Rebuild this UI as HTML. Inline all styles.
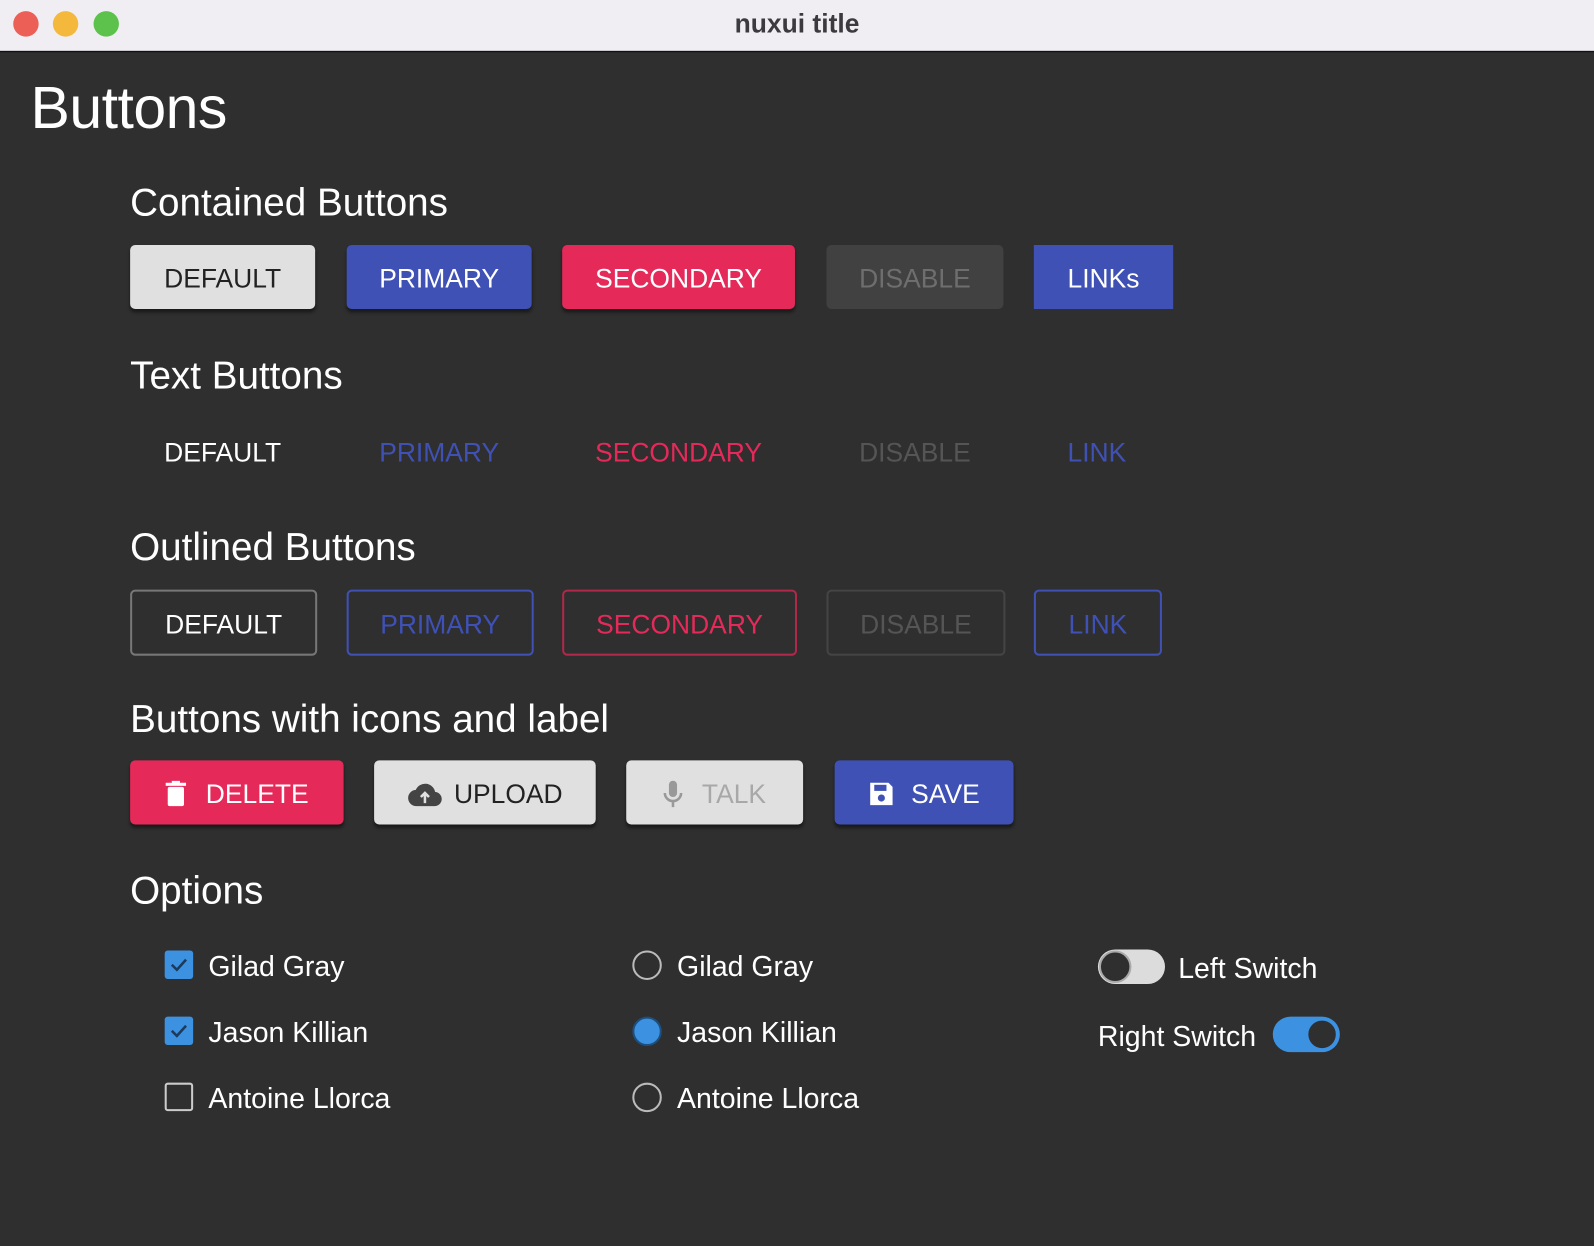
<!DOCTYPE html>
<html><head><meta charset="utf-8"><style>
html,body{margin:0;padding:0;width:1594px;height:1246px;overflow:hidden;background:#2f2f2f;font-family:"Liberation Sans",Arial,sans-serif;}
#w{position:absolute;left:0;top:0;width:1568px;height:1226px;transform:scale(1.01659);transform-origin:0 0;}
.tb{position:absolute;left:0;top:0;width:1568px;height:50px;background:#f1eef3;border-bottom:2px solid #111;}
.dot{position:absolute;top:11px;width:25px;height:25px;border-radius:50%;}
.ttl{position:absolute;top:8px;left:0;width:1568px;text-align:center;font-size:26px;font-weight:bold;color:#3c3a3e;}
.a{position:absolute;}
h1,h2{margin:0;font-weight:normal;color:#fff;position:absolute;white-space:nowrap;}
h1{font-size:58px;left:30px;top:73px;letter-spacing:-0.5px}
h2{font-size:38px;left:128px;}
.b{position:absolute;height:63px;display:flex;align-items:center;justify-content:center;font-size:26px;border-radius:5px;box-sizing:border-box;white-space:nowrap;padding-top:3px;}
.sh{box-shadow:0 3px 3px rgba(0,0,0,.45);}
.o{border:2px solid;}
.lab{position:absolute;color:#fff;font-size:28px;white-space:nowrap;}
.cb{position:absolute;left:162px;width:28px;height:28px;border-radius:3px;box-sizing:border-box;}
.rd{position:absolute;left:622px;width:29px;height:29px;border-radius:50%;box-sizing:border-box;border:2px solid #bbb;}
</style></head><body><div id="w">
<div class="tb">
<div class="dot" style="left:13px;background:#ec5f57"></div>
<div class="dot" style="left:52px;background:#f4b83c"></div>
<div class="dot" style="left:92px;background:#5dc24b"></div>
<div class="ttl">nuxui title</div>
</div>
<h1>Buttons</h1>
<h2 style="top:179px">Contained Buttons</h2>
<div class="b sh" style="left:128px;top:241px;width:182px;background:#e0e0e0;color:#222">DEFAULT</div>
<div class="b sh" style="left:341px;top:241px;width:182px;background:#3f51b5;color:#fff">PRIMARY</div>
<div class="b sh" style="left:553px;top:241px;width:229px;background:#e52a5a;color:#fff">SECONDARY</div>
<div class="b" style="left:813px;top:241px;width:174px;background:#414141;color:#6e6e6e">DISABLE</div>
<div class="b" style="left:1017px;top:241px;width:137px;background:#3f51b5;color:#fff;border-radius:0">LINKs</div>

<h2 style="top:349px">Text Buttons</h2>
<div class="b" style="left:128px;top:412px;width:182px;color:#fff">DEFAULT</div>
<div class="b" style="left:341px;top:412px;width:182px;color:#3f51b5">PRIMARY</div>
<div class="b" style="left:553px;top:412px;width:229px;color:#e52a5a">SECONDARY</div>
<div class="b" style="left:813px;top:412px;width:174px;color:#555">DISABLE</div>
<div class="b" style="left:1017px;top:412px;width:124px;color:#3f51b5">LINK</div>

<h2 style="top:518px">Outlined Buttons</h2>
<div class="b o" style="left:128px;top:580px;width:184px;height:65px;color:#fff;border-color:#777">DEFAULT</div>
<div class="b o" style="left:341px;top:580px;width:184px;height:65px;color:#3f51b5;border-color:#3f51b5">PRIMARY</div>
<div class="b o" style="left:553px;top:580px;width:231px;height:65px;color:#e52a5a;border-color:#b0284a">SECONDARY</div>
<div class="b o" style="left:813px;top:580px;width:176px;height:65px;color:#555;border-color:#444">DISABLE</div>
<div class="b o" style="left:1017px;top:580px;width:126px;height:65px;color:#3f51b5;border-color:#3f51b5">LINK</div>

<h2 style="top:687px">Buttons with icons and label</h2>
<div class="b sh" style="left:128px;top:748px;width:210px;background:#e52a5a;color:#fff">
<svg width="22" height="26" viewBox="0 0 22 26" style="margin-right:18px"><rect x="3" y="6" width="16" height="19" rx="2" fill="#fff"/><rect x="1" y="2" width="20" height="3" fill="#fff"/><rect x="7" y="0" width="8" height="3" fill="#fff"/></svg>DELETE</div>
<div class="b sh" style="left:368px;top:748px;width:218px;background:#e0e0e0;color:#222">
<svg width="34" height="26" viewBox="0 0 34 26" style="margin-right:12px"><path d="M9 25h17a7 7 0 0 0 1-14A10 10 0 0 0 8 9a8 8 0 0 0 1 16z" fill="#444"/><path d="M17 22v-9M13 16l4-4 4 4" stroke="#e0e0e0" stroke-width="2.5" fill="none"/></svg>UPLOAD</div>
<div class="b sh" style="left:616px;top:748px;width:174px;background:#e0e0e0;color:#a8a8a8">
<svg width="20" height="28" viewBox="0 0 20 28" style="margin-right:18px"><rect x="6" y="1" width="8" height="16" rx="4" fill="#999"/><path d="M2 13a8 8 0 0 0 16 0M10 21v6" stroke="#999" stroke-width="2.5" fill="none"/></svg>TALK</div>
<div class="b sh" style="left:821px;top:748px;width:176px;background:#3f51b5;color:#fff">
<svg width="26" height="26" viewBox="0 0 26 26" style="margin-right:16px"><path d="M2 2h18l4 4v18H2z" fill="#fff"/><rect x="6" y="4" width="12" height="6" fill="#3f51b5"/><circle cx="13" cy="17" r="3.5" fill="#3f51b5"/></svg>SAVE</div>

<h2 style="top:856px">Options</h2>
<div class="cb" style="top:935px;background:#3c91e0"><svg width="28" height="28"><path d="M7 14l5 5 9-10" stroke="#1c3a5c" stroke-width="2.5" fill="none"/></svg></div>
<div class="cb" style="top:1000px;background:#3c91e0"><svg width="28" height="28"><path d="M7 14l5 5 9-10" stroke="#1c3a5c" stroke-width="2.5" fill="none"/></svg></div>
<div class="cb" style="top:1065px;border:2px solid #ccc"></div>
<div class="lab" style="left:205px;top:935px">Gilad Gray</div>
<div class="lab" style="left:205px;top:1000px">Jason Killian</div>
<div class="lab" style="left:205px;top:1065px">Antoine Llorca</div>
<div class="rd" style="top:935px"></div>
<div class="rd" style="top:1000px;background:#3c91e0;border-color:#1d4f80"></div>
<div class="rd" style="top:1065px"></div>
<div class="lab" style="left:666px;top:935px">Gilad Gray</div>
<div class="lab" style="left:666px;top:1000px">Jason Killian</div>
<div class="lab" style="left:666px;top:1065px">Antoine Llorca</div>

<div class="a" style="left:1080px;top:934px;width:66px;height:34px;border-radius:17px;background:#dcdcdc"></div>
<div class="a" style="left:1081px;top:935px;width:32px;height:32px;border-radius:50%;background:#2f2f2f;border:2px solid #aaa;box-sizing:border-box"></div>
<div class="lab" style="left:1159px;top:937px">Left Switch</div>
<div class="lab" style="left:1080px;top:1004px">Right Switch</div>
<div class="a" style="left:1252px;top:1000px;width:66px;height:35px;border-radius:18px;background:#3c91e0"></div>
<div class="a" style="left:1285px;top:1002px;width:31px;height:31px;border-radius:50%;background:#2f2f2f;border:2px solid #3c91e0;box-sizing:border-box"></div>
</div></body></html>
